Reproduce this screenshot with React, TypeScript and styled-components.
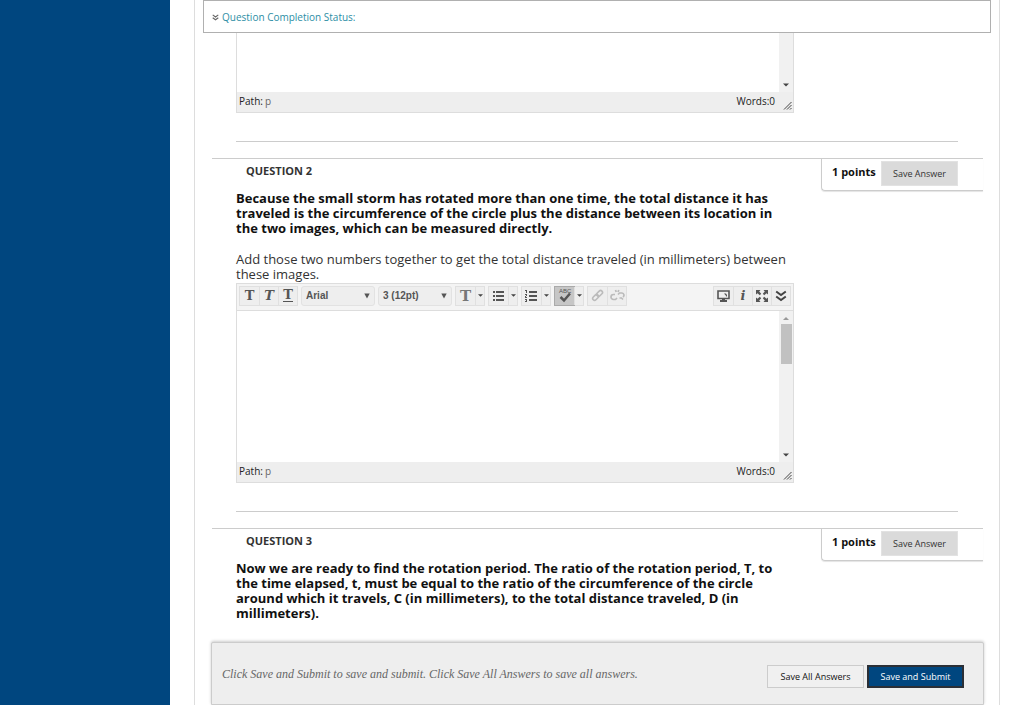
import React from 'react';
import styled, { createGlobalStyle } from 'styled-components';

const GlobalStyle = createGlobalStyle`
  * { box-sizing: border-box; }
  body {
    margin: 0;
    background: #fff;
    color: #111;
    font-family: 'Open Sans', 'Noto Sans', sans-serif;
    font-size: 13px;
    line-height: 15px;
  }
`;

const Page = styled.div`
  display: flex;
  min-height: 100vh;
`;

const Sidebar = styled.aside`
  flex: 0 0 170px;
  background: #00467f;
`;

const Main = styled.main`
  flex: 1;
  min-width: 0;
  display: flex;
  flex-direction: column;
  margin: 0 24px;
  padding: 0 8px;
  border: solid #ddd;
  border-width: 0 1px;
`;

const StatusBar = styled.header`
  height: 33px;
  display: flex;
  align-items: center;
  gap: 3px;
  padding: 1px 8px 0;
  border: 1px solid #b0b0b0;
  background: #fff;
`;

const StatusLink = styled.a`
  color: #2d8ea5;
  font-size: 10px;
  text-decoration: none;
`;

const Content = styled.div`
  flex: 1;
  padding: 0 8px 0 9px;
`;

const Rule = styled.hr`
  height: 1px;
  margin: 28px 25px 16px 24px;
  border: 0;
  background: #ccc;
`;

const QuestionBlock = styled.section`
  display: flex;
  align-items: flex-start;
  justify-content: space-between;
  border-top: 1px solid #ccc;
`;

const QuestionBody = styled.div`
  flex: 0 1 582px;
  min-width: 0;
  padding: 4px 0 0 24px;
`;

const CutOff = styled.div`
  max-width: 582px;
  padding-left: 24px;
`;

const QuestionTitle = styled.h3`
  margin: 0 0 12px;
  padding-left: 10px;
  color: #333;
  font-size: 11px;
  font-weight: 700;
  line-height: 16px;
`;

const Prompt = styled.p<{ $bold?: boolean }>`
  margin: 0;
  font-size: 13px;
  font-weight: ${(p) => (p.$bold ? 700 : 400)};
  color: ${(p) => (p.$bold ? '#111' : '#333')};

  & + & {
    margin-top: 16px;
  }
`;

const PointsTab = styled.div`
  flex: 0 0 162px;
  display: flex;
  align-items: flex-start;
  height: 32px;
  padding: 2px 25px 0 10px;
  justify-content: space-between;
  border: solid #ccc;
  border-width: 0 0 1px 1px;
  border-radius: 0 0 0 4px;
  box-shadow: 0 1px 1px #e4e4e4;
`;

const Points = styled.span`
  padding-top: 3px;
  font-size: 11px;
  font-weight: 700;
`;

const SaveAnswer = styled.button`
  width: 77px;
  height: 25px;
  padding: 0;
  border: 1px solid #e2e2e2;
  background: #dadada;
  color: #333;
  font: 9px 'Open Sans', sans-serif;
`;

const EditorFrame = styled.div<{ $openTop: boolean }>`
  border: 1px solid #ddd;
  border-top-width: ${(p) => (p.$openTop ? '0' : '1px')};

  ${Prompt} + & {
    margin-top: 1px;
  }
`;

const Toolbar = styled.div`
  height: 27px;
  display: flex;
  align-items: center;
  gap: 3px;
  padding: 0 2px 3px;
  border-bottom: 1px solid #ddd;
  background: #f4f4f4;
`;

const Group = styled.div<{ $end?: boolean }>`
  display: flex;
  height: 20px;
  margin-left: ${(p) => (p.$end ? 'auto' : '0')};
  border: 1px solid #e0e0e0;
  background: #eee;
`;

const Tool = styled.button<{ $narrow?: boolean; $active?: boolean; $faded?: boolean }>`
  width: ${(p) => (p.$narrow ? '9px' : '19px')};
  height: 18px;
  display: flex;
  align-items: center;
  justify-content: center;
  padding: 0;
  border: 0;
  background: ${(p) => (p.$active ? '#c6c6c6' : 'transparent')};
  outline: ${(p) => (p.$active ? '1px solid #aaa' : 'none')};
  color: ${(p) => (p.$faded ? '#bbb' : '#555')};

  & + & {
    border-left: 1px solid #e0e0e0;
  }
`;

const Letter = styled.span<{ $italic?: boolean; $underline?: boolean; $large?: boolean }>`
  font-family: 'DejaVu Serif', serif;
  font-weight: 700;
  font-size: ${(p) => (p.$large ? '15px' : '13px')};
  line-height: 12px;
  color: ${(p) => (p.$large ? '#777' : '#555')};
  font-style: ${(p) => (p.$italic ? 'italic' : 'normal')};
  border-bottom: ${(p) => (p.$underline ? '1px solid #555' : '0')};
`;

const SelectBox = styled.span`
  display: grid;
  align-items: center;
  width: 74px;
  height: 20px;
  border: 1px solid #e2e2e2;
  border-radius: 3px;
  background: #eee;

  & > * {
    grid-area: 1 / 1;
  }

  & > svg {
    justify-self: end;
    margin-right: 4px;
    pointer-events: none;
  }
`;

const Select = styled.select`
  appearance: none;
  width: 100%;
  height: 18px;
  padding: 0 14px 1px 4px;
  border: 0;
  background: transparent;
  color: #555;
  font: bold 10px 'Liberation Sans', Arial, sans-serif;
`;

const EditArea = styled.div<{ $height: number }>`
  display: flex;
  height: ${(p) => p.$height}px;
`;

const TextArea = styled.textarea`
  flex: 1;
  min-width: 0;
  padding: 8px;
  border: 0;
  outline: 0;
  resize: none;
  overflow: hidden;
  background: #fff;
  font: 13px 'Liberation Sans', Arial, sans-serif;
`;

const ScrollTrack = styled.div`
  width: 14px;
  display: flex;
  flex-direction: column;
  align-items: center;
  padding: 4px 0;
  background: #f1f1f1;
`;

const ScrollThumb = styled.div`
  width: 11px;
  height: 40px;
  margin-top: 3px;
  background: #c1c1c1;
`;

const Spacer = styled.div`
  flex: 1;
`;

const PathBar = styled.div`
  height: 20px;
  display: flex;
  align-items: center;
  gap: 8px;
  padding: 0 0 2px 2px;
  background: #eee;
  color: #222;
  font-size: 10px;

  & > svg {
    align-self: flex-end;
  }
`;

const PathTag = styled.span`
  flex: 1;
  margin-left: -6px;
  color: #666;
`;

const SubmitPanel = styled.footer`
  height: 63px;
  display: flex;
  align-items: center;
  gap: 3px;
  margin: 0 7px 0 8px;
  padding: 6px 19px 0 10px;
  border: 1px solid #ccc;
  border-radius: 2px 2px 0 0;
  background: #eee;
  box-shadow: 0 -1px 3px #ccc;
`;

const SubmitNote = styled.p`
  flex: 1;
  margin: 0;
  padding-bottom: 6px;
  color: #666;
  font: italic 12px/16px 'Liberation Serif', serif;
`;

const PanelButton = styled.button<{ $primary?: boolean }>`
  width: 97px;
  height: 23px;
  padding: 0;
  border: ${(p) => (p.$primary ? '2px solid #2b2f36' : '1px solid #ccc')};
  background: ${(p) => (p.$primary ? '#00467f' : '#f0f0f0')};
  color: ${(p) => (p.$primary ? '#fff' : '#111')};
  font: 9px 'Open Sans', sans-serif;
`;

const Triangle = ({ up, faint, size = 6 }: { up?: boolean; faint?: boolean; size?: number }) => (
  <svg width={size} height={size} viewBox="0 0 6 6">
    <path d={up ? 'M0 5L3 2L6 5Z' : 'M0 1.5H6L3 4.5Z'} fill={faint ? '#999' : '#444'} />
  </svg>
);

const SelectArrow = () => (
  <svg width="6" height="6" viewBox="0 0 6 6">
    <path d="M0.3 0.5H5.7L3 5.5Z" fill="#555" />
  </svg>
);

const ListIcon = ({ numbered }: { numbered?: boolean }) => (
  <svg width="13" height="12" viewBox="0 0 13 12" fill="currentColor">
    <path d="M4 1H12V3H4ZM4 5H12V7H4ZM4 9H12V11H4Z" />
    {numbered ? (
      <path d="M0 0H2V3H1V1H0ZM0 4H2V6H1V7H2V8H0V6H1V5H0ZM0 9H2V12H0V11H1V10H0Z" />
    ) : (
      <path d="M1 1H3V3H1ZM1 5H3V7H1ZM1 9H3V11H1Z" />
    )}
  </svg>
);

const SpellIcon = () => (
  <svg width="16" height="16" viewBox="0 0 16 16">
    <text x="2" y="5" fontFamily="Liberation Sans" fontSize="6" fill="#555">ABC</text>
    <path d="M3.5 9L7 12.5L13 5.5" fill="none" stroke="#555" strokeWidth="2.5" />
  </svg>
);

const LinkIcon = () => (
  <svg width="13" height="13" viewBox="0 0 13 13" fill="none" stroke="currentColor" strokeWidth="1.6">
    <rect x="-3.3" y="-1.9" width="6.6" height="3.8" rx="1.9" transform="translate(8.6 4.4) rotate(-45)" />
    <rect x="-3.3" y="-1.9" width="6.6" height="3.8" rx="1.9" transform="translate(4.6 8.4) rotate(-45)" />
  </svg>
);

const UnlinkIcon = () => (
  <svg width="15" height="13" viewBox="0 0 15 13" fill="none" stroke="currentColor" strokeWidth="1.7">
    <path d="M5 5.5H3.5A2.3 2.3 0 0 0 3.5 10.5H5.5L7 9M8 5.5L9.5 4H12A2.2 2.2 0 0 1 13 8M9.5 9H11.5L13 10.5M5.5 1L6.2 3M8.8 1L8 3" />
  </svg>
);

const MonitorIcon = () => (
  <svg width="13" height="12" viewBox="0 0 13 12">
    <path d="M1 1H12V8.5H1Z" fill="none" stroke="#555" strokeWidth="1.6" />
    <path d="M5 9H8V10H10V12H3V10H5Z" fill="#555" />
    <path d="M7 3.5H9L10 5V7Z" fill="#555" />
  </svg>
);

const ExpandIcon = () => (
  <svg width="12" height="12" viewBox="0 0 12 12" fill="#555">
    <path d="M0 0H4.5L3.2 1.5L5.2 3.8L3.8 5.2L1.5 3.2L0 4.5ZM12 0H7.5L8.8 1.5L6.8 3.8L8.2 5.2L10.5 3.2L12 4.5ZM0 12H4.5L3.2 10.5L5.2 8.2L3.8 6.8L1.5 8.8L0 7.5ZM12 12H7.5L8.8 10.5L6.8 8.2L8.2 6.8L10.5 8.8L12 7.5Z" />
  </svg>
);

const ChevronsIcon = ({ size = 12, color = '#444' }: { size?: number; color?: string }) => (
  <svg width={size} height={size} viewBox="0 0 12 12" fill="none" stroke={color} strokeWidth="2">
    <path d="M1.2 1.5L6 5L10.8 1.5M1.2 6.5L6 10L10.8 6.5" />
  </svg>
);

const GripIcon = () => (
  <svg width="10" height="10" viewBox="0 0 10 10" stroke="#444" strokeWidth="1">
    <path d="M1 9.5L8.5 2M4 9.5L8.5 5M7 9.5L8.5 8" />
  </svg>
);

const EditorToolbar = () => (
  <Toolbar>
    <Group>
      <Tool aria-label="Bold"><Letter>T</Letter></Tool>
      <Tool aria-label="Italic"><Letter $italic>T</Letter></Tool>
      <Tool aria-label="Underline"><Letter $underline>T</Letter></Tool>
    </Group>
    <SelectBox>
      <Select aria-label="Font family"><option>Arial</option></Select>
      <SelectArrow />
    </SelectBox>
    <SelectBox>
      <Select aria-label="Font size"><option>3 (12pt)</option></Select>
      <SelectArrow />
    </SelectBox>
    <Group>
      <Tool aria-label="Text color"><Letter $large>T</Letter></Tool>
      <Tool $narrow aria-label="Text color options"><Triangle size={5} /></Tool>
    </Group>
    <Group>
      <Tool aria-label="Bulleted list"><ListIcon /></Tool>
      <Tool $narrow aria-label="Bulleted list options"><Triangle size={5} /></Tool>
    </Group>
    <Group>
      <Tool aria-label="Numbered list"><ListIcon numbered /></Tool>
      <Tool $narrow aria-label="Numbered list options"><Triangle size={5} /></Tool>
    </Group>
    <Group>
      <Tool $active aria-label="Spell check"><SpellIcon /></Tool>
      <Tool $narrow aria-label="Spell check options"><Triangle size={5} /></Tool>
    </Group>
    <Group>
      <Tool $faded aria-label="Insert link"><LinkIcon /></Tool>
      <Tool $faded aria-label="Remove link"><UnlinkIcon /></Tool>
    </Group>
    <Group $end>
      <Tool aria-label="Preview"><MonitorIcon /></Tool>
      <Tool aria-label="Help"><Letter $italic>i</Letter></Tool>
      <Tool aria-label="Full screen"><ExpandIcon /></Tool>
      <Tool aria-label="Show more"><ChevronsIcon /></Tool>
    </Group>
  </Toolbar>
);

const Editor = ({ label, height, toolbar = false }: { label: string; height: number; toolbar?: boolean }) => (
  <EditorFrame $openTop={!toolbar}>
    {toolbar && <EditorToolbar />}
    <EditArea $height={height}>
      <TextArea aria-label={label} />
      <ScrollTrack>
        {toolbar && <Triangle up faint />}
        {toolbar && <ScrollThumb />}
        <Spacer />
        <Triangle />
      </ScrollTrack>
    </EditArea>
    <PathBar>
      <span>Path:</span>
      <PathTag>p</PathTag>
      <span>Words:0</span>
      <GripIcon />
    </PathBar>
  </EditorFrame>
);

const Question = ({ title, children }: { title: string; children: React.ReactNode }) => (
  <QuestionBlock>
    <QuestionBody>
      <QuestionTitle>{title}</QuestionTitle>
      {children}
    </QuestionBody>
    <PointsTab>
      <Points>1 points</Points>
      <SaveAnswer>Save Answer</SaveAnswer>
    </PointsTab>
  </QuestionBlock>
);

export default function App() {
  return (
    <Page>
      <GlobalStyle />
      <Sidebar />
      <Main>
        <StatusBar>
          <ChevronsIcon size={7} color="#666" />
          <StatusLink href="#status">Question Completion Status:</StatusLink>
        </StatusBar>
        <Content>
          <CutOff>
            <Editor label="Answer to question 1" height={59} />
          </CutOff>
          <Rule />
          <Question title="QUESTION 2">
            <Prompt $bold>
              Because the small storm has rotated more than one time, the total distance it has traveled is the
              circumference of the circle plus the distance between its location in the two images, which can be
              measured directly.
            </Prompt>
            <Prompt>
              Add those two numbers together to get the total distance traveled (in millimeters) between these images.
            </Prompt>
            <Editor label="Answer to question 2" height={151} toolbar />
          </Question>
          <Rule />
          <Question title="QUESTION 3">
            <Prompt $bold>
              Now we are ready to find the rotation period. The ratio of the rotation period, T, to the time elapsed,
              t, must be equal to the ratio of the circumference of the circle around which it travels, C (in
              millimeters), to the total distance traveled, D (in millimeters).
            </Prompt>
          </Question>
        </Content>
        <SubmitPanel>
          <SubmitNote>Click Save and Submit to save and submit. Click Save All Answers to save all answers.</SubmitNote>
          <PanelButton>Save All Answers</PanelButton>
          <PanelButton $primary>Save and Submit</PanelButton>
        </SubmitPanel>
      </Main>
    </Page>
  );
}
